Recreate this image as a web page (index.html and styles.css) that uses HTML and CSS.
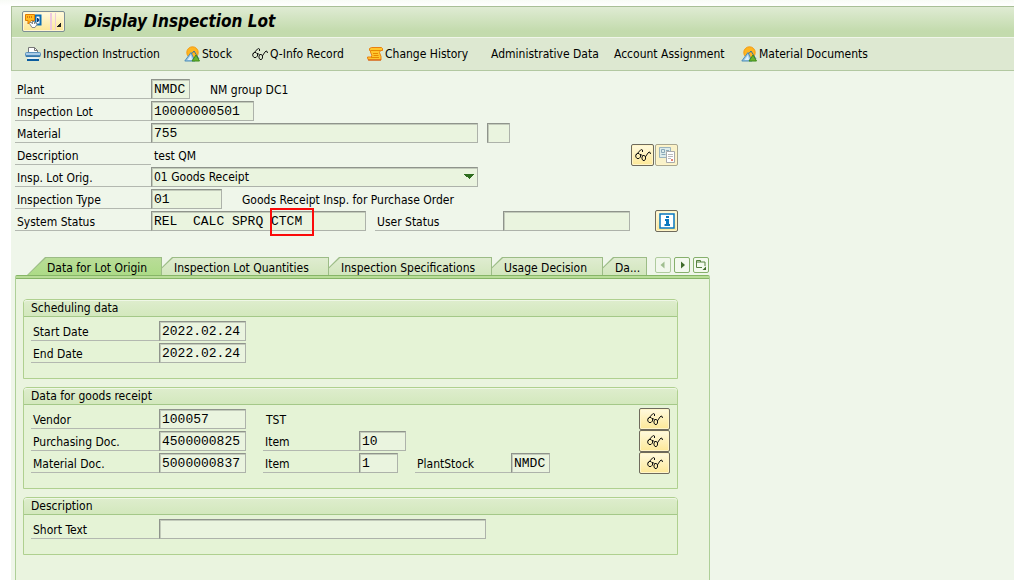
FILE: index.html
```
<!DOCTYPE html>
<html lang="en">
<head>
<meta charset="utf-8">
<meta name="viewport" content="width=device-width, initial-scale=1">
<title>Display Inspection Lot</title>
<link rel="stylesheet" href="styles.css">
</head>
<body>
<svg class="defs" aria-hidden="true">
  <symbol id="glasses" viewBox="0 0 16 12">
    <path d="M1 6L5.500 1Q7 0 7.500 1V3M2 4.500h2l1.500 1.500v2L4 9.500H2L.8 8V6zM8 6.500h1.500l1 1.500v2l-1 1.500H8l-1-1.500V8zM5 5.500q1.500-.5 2.500 1.500M10.300 8L13 4Q14 2.500 15 3.300L15.500 5" fill="none" stroke="#111"/>
  </symbol>
  <symbol id="mountains" viewBox="0 0 16 16">
    <circle cx="8.500" cy="6.500" r="5.700" fill="#ffb51f" stroke="#f39a12"/>
    <path d="M.8 15L7 6.500l4 8.500z" fill="#9cc9e8" stroke="#4f8db8"/>
    <path d="M3.500 14l3.500-5 1 5z" fill="#dff0fb"/>
    <path d="M8 7.500L10 5l5 8" fill="none" stroke="#2f74a5"/>
    <path d="M8 15l4-6 3.500 6z" fill="#6ab52e" stroke="#3d8a1a"/>
  </symbol>
</svg>
<div class="app">
  <header class="titlebar">
    <button class="menu-button" type="button" aria-label="Services for object">
      <svg width="18" height="16" viewBox="0 0 18 16" aria-hidden="true">
        <path d="M10.500 2.500h5v9h-5z" fill="#fff" stroke="#0a6cb4" stroke-width="2"/>
        <path d="M12.500 5l1.500 2-1.500 2z" fill="#0a3c78" stroke="#0a3c78"/>
        <path d="M.5 1.500h9v6H6L3 11V7.500H.5z" fill="#ffbd22" stroke="#e07b00"/>
        <path d="M2 4h1m1 0h1m1 0h1" stroke="#c03000"/>
        <path d="M4.500 10.500L6 9l1.500 2V8L9.500 9v2l1-2L12 11.500l-2 3H7z" fill="#fff" stroke="#888"/>
      </svg>
      <span class="menu-stripe"></span>
      <span class="menu-arrow"></span>
    </button>
    <h1 class="title">Display Inspection Lot</h1>
  </header>
  <nav class="toolbar" aria-label="Application toolbar">
    <button class="tool tool-print" type="button">
      <svg width="16" height="16" viewBox="0 0 16 16" aria-hidden="true">
        <path d="M3.500 6.500v-5h6l3 3v2" fill="#fff" stroke="#777"/>
        <path d="M9.500 1.500v3h3" fill="none" stroke="#777"/>
        <rect x=".5" y="6.500" width="15" height="4" rx="1" fill="#a9cbe6" stroke="#5b92bd"/>
        <path d="M1 10h14" stroke="#2a6fa6" stroke-width="1.500"/>
        <path d="M2.500 11.500h11v2h-11z" fill="#e8f2fa"/>
        <path d="M2 14h12" stroke="#0a5c9e" stroke-width="2"/>
      </svg>Inspection Instruction</button>
    <button class="tool tool-stock" type="button"><svg width="16" height="16" aria-hidden="true"><use href="#mountains"/></svg>Stock</button>
    <button class="tool tool-qinfo" type="button"><svg width="16" height="12" aria-hidden="true"><use href="#glasses"/></svg>Q-Info Record</button>
    <button class="tool tool-history" type="button">
      <svg width="16" height="16" viewBox="0 0 16 16" aria-hidden="true">
        <path d="M4.500 1.500h10l1 1v2h-2l-1 2 1.500 4v3.500H1.500L.5 12V11h3.500l1-1-1.500-4V4.500H2.500V2.500z" fill="#ffc62c" stroke="#e98010"/>
        <path d="M4 4.500h9.500M6 7.500h5M6.500 9.500h5M4 11.500h8" stroke="#e78a00"/>
        <path d="M1 14h13" stroke="#d0561a"/>
      </svg>Change History</button>
    <button class="tool tool-admin" type="button">Administrative Data</button>
    <button class="tool tool-account" type="button">Account Assignment</button>
    <button class="tool" type="button"><svg width="16" height="16" aria-hidden="true"><use href="#mountains"/></svg>Material Documents</button>
  </nav>

  <main class="content">
    <form class="lot">
      <div class="row">
        <label class="label" for="plant">Plant</label>
        <input class="field w-code" id="plant" value="NMDC" readonly>
        <span class="text">NM group DC1</span>
      </div>
      <div class="row">
        <label class="label" for="lot">Inspection Lot</label>
        <input class="field w-lot" id="lot" value="10000000501" readonly>
      </div>
      <div class="row">
        <label class="label" for="material">Material</label>
        <input class="field w-long" id="material" value="755" readonly>
        <input class="field w-flag" aria-label="Material revision" readonly>
      </div>
      <div class="row">
        <span class="label">Description</span>
        <span class="text text-near">test QM</span>
        <span class="actions">
          <button class="icon-button" type="button" aria-label="Display"><svg width="16" height="12" aria-hidden="true"><use href="#glasses"/></svg></button>
          <button class="icon-button" type="button" aria-label="Copy" disabled>
            <svg width="16" height="16" viewBox="0 0 16 16" aria-hidden="true">
              <path d="M.5 .5h11v10H.5z" fill="#dcebea" stroke="#9bb4bf"/>
              <path d="M2.500 2.500h3v3h-3zM7 3.500h3M2.500 7.500h4" fill="none" stroke="#8ba9b8"/>
              <path d="M7.500 4.500h8v11h-8z" fill="#fff" stroke="#aaa"/>
              <path d="M9 7.500h5M9 9.500h5M9 11.500h3" stroke="#bbb"/>
              <path d="M12 12h2v2h-2z" fill="#e8806e"/>
            </svg>
          </button>
        </span>
      </div>
      <div class="row">
        <label class="label" for="origin">Insp. Lot Orig.</label>
        <select class="field select w-long" id="origin"><option>01 Goods Receipt</option></select>
      </div>
      <div class="row">
        <label class="label" for="type">Inspection Type</label>
        <input class="field w-type" id="type" value="01" readonly>
        <span class="text">Goods Receipt Insp. for Purchase Order</span>
      </div>
      <div class="row">
        <label class="label" for="status">System Status</label>
        <span class="marked">
          <input class="field w-status" id="status" value="REL  CALC SPRQ CTCM" readonly>
          <span class="marker"></span>
        </span>
        <label class="label label-user" for="user-status">User Status</label>
        <input class="field w-user" id="user-status" readonly>
        <span class="actions">
          <button class="icon-button" type="button" aria-label="Status information">
            <svg width="16" height="16" viewBox="0 0 16 16" aria-hidden="true">
              <path d="M1 1h14v14H1z" fill="#fff" stroke="#0a78c0" stroke-width="1.500"/>
              <path d="M7 3h3v2H7zM6 6h4v5h1v2H5.500v-2H7V8H6z" fill="#0a78c0"/>
            </svg>
          </button>
        </span>
      </div>
    </form>

    <div class="tabstrip">
      <div class="tabs" role="tablist">
        <button class="tab tab-origin tab-active" type="button" role="tab" aria-selected="true">Data for Lot Origin</button>
        <button class="tab tab-quantities" type="button" role="tab">Inspection Lot Quantities</button>
        <button class="tab tab-specs" type="button" role="tab">Inspection Specifications</button>
        <button class="tab tab-usage" type="button" role="tab">Usage Decision</button>
        <button class="tab tab-more" type="button" role="tab">Da...</button>
      </div>
      <div class="tab-nav">
        <button class="nav-button" type="button" aria-label="Scroll left" disabled><svg width="14" height="14" viewBox="0 0 14 14" aria-hidden="true"><path d="M8.500 3.500v7l-4-3.500z" fill="#6d9a55"/></svg></button>
        <button class="nav-button" type="button" aria-label="Scroll right"><svg width="14" height="14" viewBox="0 0 14 14" aria-hidden="true"><path d="M6 3.500v7L10 7z" fill="#3f6b2a"/></svg></button>
        <button class="nav-button" type="button" aria-label="Tab list"><svg width="14" height="14" viewBox="0 0 14 14" aria-hidden="true"><path d="M8 9.500H2.500v-7h4v1.500h4.500V8M2.500 4h4" fill="none" stroke="#55803e"/><path d="M12 8.500V12H8.500z" fill="#3f6b2a"/></svg></button>
      </div>
    </div>

    <section class="panel">
      <form class="group">
        <h2 class="group-title">Scheduling data</h2>
        <div class="group-body">
          <div class="row">
            <label class="label label-group" for="start">Start Date</label>
            <input class="field w-date" id="start" value="2022.02.24" readonly>
          </div>
          <div class="row">
            <label class="label label-group" for="end">End Date</label>
            <input class="field w-date" id="end" value="2022.02.24" readonly>
          </div>
        </div>
      </form>

      <form class="group">
        <h2 class="group-title">Data for goods receipt</h2>
        <div class="group-body">
          <div class="row">
            <label class="label label-group" for="vendor">Vendor</label>
            <input class="field w-date" id="vendor" value="100057" readonly>
            <span class="text">TST</span>
            <span class="actions"><button class="icon-button icon-wide" type="button" aria-label="Display vendor"><svg width="16" height="12" aria-hidden="true"><use href="#glasses"/></svg></button></span>
          </div>
          <div class="row">
            <label class="label label-group" for="po">Purchasing Doc.</label>
            <input class="field w-date" id="po" value="4500000825" readonly>
            <label class="label label-item" for="po-item">Item</label>
            <input class="field w-item" id="po-item" value="10" readonly>
            <span class="actions"><button class="icon-button icon-wide" type="button" aria-label="Display purchasing document"><svg width="16" height="12" aria-hidden="true"><use href="#glasses"/></svg></button></span>
          </div>
          <div class="row">
            <label class="label label-group" for="md">Material Doc.</label>
            <input class="field w-date" id="md" value="5000000837" readonly>
            <label class="label label-item" for="md-item">Item</label>
            <input class="field w-code" id="md-item" value="1" readonly>
            <label class="label label-item" for="stock">PlantStock</label>
            <input class="field w-code" id="stock" value="NMDC" readonly>
            <span class="actions"><button class="icon-button icon-wide" type="button" aria-label="Display material document"><svg width="16" height="12" aria-hidden="true"><use href="#glasses"/></svg></button></span>
          </div>
        </div>
      </form>

      <form class="group">
        <h2 class="group-title">Description</h2>
        <div class="group-body">
          <div class="row">
            <label class="label label-group" for="short">Short Text</label>
            <input class="field w-long" id="short" readonly>
          </div>
        </div>
      </form>
    </section>
  </main>
</div>
</body>
</html>
```
FILE: styles.css
```
* {
  box-sizing: border-box;
}

body {
  margin: 0;
  background: #fff;
  color: #000;
}

body,
button,
select {
  font: 12px/16px "DejaVu Sans Condensed", "Noto Sans", sans-serif;
}

button {
  padding: 0;
  border: 0;
  background: none;
  color: #000;
  white-space: nowrap;
}

svg {
  display: block;
  flex: none;
}

.defs {
  position: absolute;
  width: 0;
  height: 0;
}

.app {
  display: flex;
  flex-direction: column;
  min-height: 100vh;
  padding: 6px 0 0 11px;
  background: linear-gradient(#f8fbf6, #fff 6px);
}

/* Title and toolbar */
.titlebar {
  display: flex;
  align-items: center;
  gap: 19px;
  height: 31px;
  padding: 0 10px 2px;
  border: solid #a9bf97;
  border-width: 1px 0 0 1px;
  background: linear-gradient(#dfebd3, #c3dbad 80%);
}

.title {
  margin: 0;
  font: italic bold 17px/20px "DejaVu Sans Condensed", "Noto Sans", sans-serif;
}

.menu-button {
  display: flex;
  align-items: center;
  width: 43px;
  height: 21px;
  padding: 0 2px;
  border: 1px solid #7d8f97;
  border-radius: 2px;
  background: linear-gradient(#fffbe2, #fde795);
  box-shadow: inset 0 0 0 1px #fff6cf;
}

.menu-stripe {
  width: 6px;
  height: 17px;
  margin-left: 7px;
  border: solid #ecc9dd;
  border-width: 0 1px 0 2px;
}

.menu-arrow {
  align-self: flex-end;
  width: 4px;
  height: 4px;
  margin: 0 0 4px 1px;
  background: linear-gradient(135deg, transparent 50%, #222 50%);
}

.toolbar {
  display: flex;
  align-items: center;
  height: 34px;
  padding-left: 13px;
  border: solid #b2c8a1;
  border-width: 0 0 1px 1px;
  background: #dde8d1;
  box-shadow: inset 0 1px #f0f6ea;
}

.tool {
  display: flex;
  align-items: center;
  gap: 2px;
}

.tool-print {
  width: 159px;
}

.tool-stock {
  width: 68px;
}

.tool-qinfo {
  width: 115px;
}

.tool-history {
  width: 124px;
}

.tool-admin {
  width: 123px;
}

.tool-account {
  width: 127px;
}

/* Form rows */
.content {
  display: flex;
  flex: 1;
  flex-direction: column;
  padding: 8px 4px 0;
  background: #eff6ea;
}

.row {
  display: flex;
  align-items: center;
  height: 20px;
}

.row + .row {
  margin-top: 2px;
}

.lot {
  max-width: 663px;
}

.label {
  flex: none;
  width: 136px;
  height: 20px;
  padding: 3px 2px 0;
  border-bottom: 1px solid #b3b8b0;
  white-space: nowrap;
}

.label-user {
  width: 128px;
  margin-left: 9px;
}

.label-group {
  width: 128px;
}

.label-item {
  width: 96px;
  margin-left: 17px;
}

.text {
  padding-top: 2px;
  margin-left: 20px;
  white-space: nowrap;
}

.text-near {
  margin-left: 3px;
}

.field {
  height: 20px;
  margin: 0;
  padding: 0 2px;
  border: 1px solid;
  border-color: #8f948c #adb2aa #adb2aa #8f948c;
  border-radius: 0;
  outline: 0;
  background: #eaf4df;
  box-shadow: inset 1px 1px #c3cbbb;
  color: #000;
  font: 13px/16px "Liberation Mono", monospace;
}

.select {
  appearance: none;
  background-image: linear-gradient(45deg, transparent 50%, #2f6d1f 50%), linear-gradient(-45deg, transparent 50%, #2f6d1f 50%);
  background-position: right 8px top 6px, right 3px top 6px;
  background-repeat: no-repeat;
  background-size: 5px 5px;
  font: 12px/16px "DejaVu Sans Condensed", "Noto Sans", sans-serif;
}

.w-code { width: 39px; }
.w-item { width: 47px; }
.w-type { width: 71px; }
.w-date { width: 87px; }
.w-lot { width: 103px; }
.w-user { width: 127px; }
.w-status { width: 215px; }
.w-long { width: 327px; }

.w-flag {
  width: 23px;
  margin-left: 9px;
}

.marked {
  display: flex;
  position: relative;
}

.marker {
  position: absolute;
  top: -3px;
  left: 119px;
  width: 44px;
  height: 28px;
  border: 2px solid #fb0a0a;
}

.actions {
  display: flex;
  gap: 1px;
  margin-left: auto;
}

.icon-button {
  display: flex;
  align-items: center;
  justify-content: center;
  width: 23px;
  height: 22px;
  border: 1px solid #6e6a5c;
  border-radius: 2px;
  background: linear-gradient(#fffadf, #fde897);
  box-shadow: inset 0 0 0 1px #fff5c8;
}

.icon-button:disabled {
  border-color: #a9a790;
  background: #f9f2ca;
}

.icon-wide {
  width: 31px;
}

/* Tabs */
.tabstrip {
  display: flex;
  max-width: 694px;
  height: 18px;
  margin-top: 26px;
}

.tabs {
  display: flex;
  flex: 1;
  padding-left: 12px;
}

.tab {
  position: relative;
  flex: none;
  height: 18px;
  padding: 3px 0 0 20px;
  text-align: left;
}

.tab::before,
.tab::after {
  position: absolute;
  z-index: -1;
  inset: 0;
  background: #9cbc86;
  clip-path: polygon(18px 0, 100% 0, 100% 100%, 0 100%);
  content: "";
}

.tab::after {
  top: 1px;
  right: 1px;
  left: 1px;
  background: linear-gradient(#dfecd0, #d2e6bd);
}

.tab-active::after {
  background: linear-gradient(#b9dd98, #addb87);
}

.tab + .tab {
  margin-left: -8px;
}

.tab-origin { z-index: 5; width: 135px; }
.tab-quantities { z-index: 4; width: 175px; }
.tab-specs { z-index: 3; width: 171px; }
.tab-usage { z-index: 2; width: 119px; }
.tab-more { z-index: 1; width: 52px; }

.tab-nav {
  display: flex;
  gap: 3px;
}

.nav-button {
  width: 16px;
  height: 16px;
  border: 1px solid #86b06c;
  border-radius: 2px;
  background: #f3f9ee;
}

.nav-button:disabled {
  opacity: 0.6;
}

/* Panel and groups */
.panel {
  display: flex;
  flex: 1;
  flex-direction: column;
  gap: 8px;
  max-width: 695px;
  padding: 23px 31px 25px 7px;
  border: 1px solid #aecf98;
  border-top-color: #86b567;
  border-bottom: 0;
  border-radius: 2px 2px 0 0;
  background: linear-gradient(#b9dd98 2px, #86b567 2px 3px, #eaf4df 3px);
}

.group {
  border: 1px solid #afd08f;
  border-radius: 4px 4px 0 0;
  background: #e5f3d6;
}

.group-title {
  height: 17px;
  margin: 0;
  padding-left: 7px;
  border-bottom: 1px solid #a4c888;
  border-radius: 3px 3px 0 0;
  background: linear-gradient(#deedcd, #d3e8bd);
  box-shadow: inset 0 1px #eff7e6;
  font: inherit;
}

.group-body {
  padding: 4px 7px 15px;
}
```
